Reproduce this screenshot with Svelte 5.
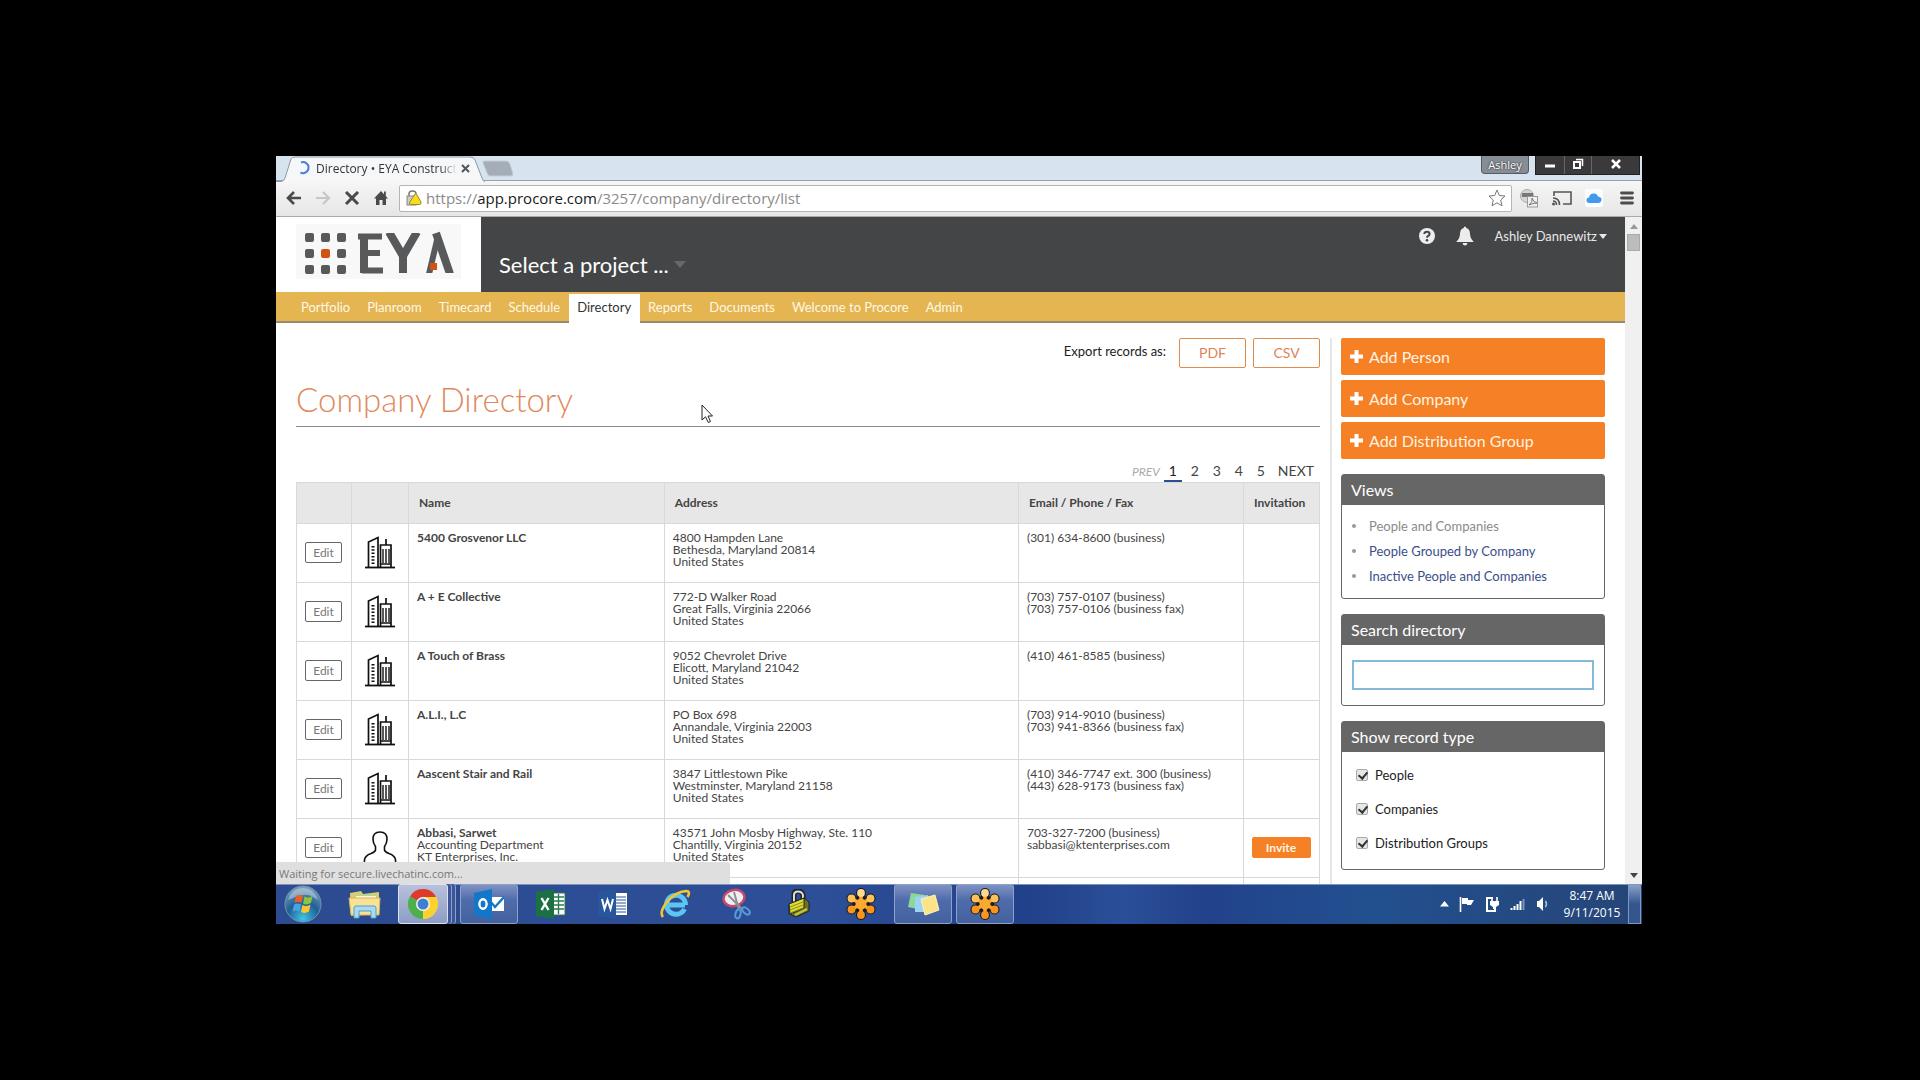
<script>
  const tabs = ['Portfolio', 'Planroom', 'Timecard', 'Schedule', 'Directory', 'Reports', 'Documents', 'Welcome to Procore', 'Admin'];
  const actions = ['Add Person', 'Add Company', 'Add Distribution Group'];
  const views = ['People and Companies', 'People Grouped by Company', 'Inactive People and Companies'];
  const types = ['People', 'Companies', 'Distribution Groups'];
  const rows = [
    { name: '5400 Grosvenor LLC', address: ['4800 Hampden Lane', 'Bethesda, Maryland 20814', 'United States'], contact: ['(301) 634-8600 (business)'] },
    { name: 'A + E Collective', address: ['772-D Walker Road', 'Great Falls, Virginia 22066', 'United States'], contact: ['(703) 757-0107 (business)', '(703) 757-0106 (business fax)'] },
    { name: 'A Touch of Brass', address: ['9052 Chevrolet Drive', 'Elicott, Maryland 21042', 'United States'], contact: ['(410) 461-8585 (business)'] },
    { name: 'A.L.I., L.C', address: ['PO Box 698', 'Annandale, Virginia 22003', 'United States'], contact: ['(703) 914-9010 (business)', '(703) 941-8366 (business fax)'] },
    { name: 'Aascent Stair and Rail', address: ['3847 Littlestown Pike', 'Westminster, Maryland 21158', 'United States'], contact: ['(410) 346-7747 ext. 300 (business)', '(443) 628-9173 (business fax)'] },
    { name: 'Abbasi, Sarwet', person: true, detail: ['Accounting Department', 'KT Enterprises, Inc.'], address: ['43571 John Mosby Highway, Ste. 110', 'Chantilly, Virginia 20152', 'United States'], contact: ['703-327-7200 (business)', 'sabbasi@ktenterprises.com'] }
  ];
  const dots = [0, 1, 2, 3, 4, 5, 6, 7, 8];
  const petals = [0, 60, 120, 180, 240, 300].map((a) => ({
    x: 16 + 11 * Math.sin((a * Math.PI) / 180),
    y: 16 - 11 * Math.cos((a * Math.PI) / 180)
  }));
</script>

{#snippet flower()}
  <svg width="32" height="32" viewBox="0 0 32 32">
    {#each petals as p}<circle cx={p.x} cy={p.y} r="5" fill="#1c1a1c" />{/each}
    <circle cx="16" cy="16" r="9" fill="#1c1a1c" />
    {#each petals as p}
      <path d="M16 16L{p.x} {p.y}" stroke="#fba92c" stroke-width="3.500" />
      <circle cx={p.x} cy={p.y} r="3.900" fill={p.y < 8 ? '#ffd890' : p.y < 16 ? '#fdc25c' : '#f9951c'} />
    {/each}
    <circle cx="16" cy="16" r="5.500" fill="#fba930" />
  </svg>
{/snippet}

<div class="stage">
  <div class="window">
    <header class="strip">
      <svg class="tabshape" width="210" height="26" viewBox="0 0 210 26">
        <path d="M0 25.500H7Q8 25 9 22L15 3Q16 1 19 1H194Q198 1 199 4L206 22Q207 25.500 209 25.500V26H0Z" fill="#f6f7f8" />
        <path d="M0 25.500H5Q8 25 9 22L15 3Q16 1 19 1H194Q198 1 199 4L206 22Q207 25.500 209 25.500" fill="none" stroke="#8c98a5" />
      </svg>
      <div class="tab">
        <svg width="14" height="14" viewBox="0 0 14 14"><path d="M3 1.500A5.500 5.500 0 1 1 2.500 11.500" fill="none" stroke="#4a7fd6" stroke-width="2" /></svg>
        <span class="tabtitle">Directory • EYA Constructi</span>
        <button class="bare" aria-label="Close tab"><svg width="9" height="9" viewBox="0 0 9 9"><path d="M1 1L8 8M8 1L1 8" stroke="#555" stroke-width="2" /></svg></button>
      </div>
      <button class="bare newtab" aria-label="New tab"><svg width="32" height="18" viewBox="0 0 32 18"><path d="M2 1H24Q27 1 28 4L31 14Q31 16 29 16H8Q6 16 5 13L1 3Q1 1 2 1Z" fill="#a5adb8" stroke="#c3ccd6" /></svg></button>
      <div class="grow"></div>
      <button class="user">Ashley</button>
      <div class="winbtns">
        <button aria-label="Minimize"><svg width="12" height="12" viewBox="0 0 12 12"><path d="M1 8H11" stroke="#fff" stroke-width="3" /></svg></button>
        <button aria-label="Restore"><svg width="12" height="12" viewBox="0 0 12 12" fill="none" stroke="#fff"><path d="M4 1.500H10.500V8" stroke-width="1.500" /><rect x="2" y="4" width="6" height="6" stroke-width="2" /></svg></button>
        <button aria-label="Close"><svg width="12" height="12" viewBox="0 0 12 12"><path d="M2 2L10 10M10 2L2 10" stroke="#fff" stroke-width="2.500" /></svg></button>
      </div>
    </header>

    <div class="toolbar">
      <button class="bare" aria-label="Back"><svg width="16" height="14" viewBox="0 0 16 14"><path d="M15 7H3M8 1L2 7L8 13" fill="none" stroke="#4a4a4a" stroke-width="2.600" /></svg></button>
      <button class="bare" aria-label="Forward"><svg width="16" height="14" viewBox="0 0 16 14"><path d="M1 7H13M8 1L14 7L8 13" fill="none" stroke="#c6c6c6" stroke-width="2.200" /></svg></button>
      <button class="bare" aria-label="Stop"><svg width="16" height="14" viewBox="0 0 16 14"><path d="M2 1L14 13M14 1L2 13" stroke="#4a4a4a" stroke-width="3" /></svg></button>
      <button class="bare" aria-label="Home"><svg width="16" height="16" viewBox="0 0 16 16"><path d="M8 1L1 8.500H3V15H6.500V10H9.500V15H13V8.500H15L12.800 6V1.500H11V4.200Z" fill="#4a4a4a" /></svg></button>
      <div class="omni">
        <svg width="16" height="17" viewBox="0 0 16 17"><path d="M3 7V4Q3 1 6.500 1T10 4V7" fill="none" stroke="#777" stroke-width="1.500" /><rect x="1" y="6" width="9" height="9" fill="#ccc" stroke="#888" /><path d="M9 4Q10 3 11 5L15 12Q15.500 14.500 13.500 14.500H5Q3 14.500 3.500 12.500Z" fill="#f5dc1e" stroke="#9b8a20" /></svg>
        <span class="url" role="textbox" aria-label="Address" aria-readonly="true" tabindex="0">https://<b>app.procore.com</b>/3257/company/directory/list</span>
        <svg width="20" height="20" viewBox="0 0 20 20"><path d="M10 2L12.300 7.500L18 8L13.700 12L15 17.800L10 14.800L5 17.800L6.300 12L2 8L7.700 7.500Z" fill="#fff" stroke="#777" /></svg>
      </div>
      <button class="bare" aria-label="PDF converter"><svg width="20" height="20" viewBox="0 0 20 20"><circle cx="8" cy="8" r="6.500" fill="#d5d5d5" stroke="#aaa" /><rect x="3" y="5" width="11" height="4" fill="#777" /><rect x="8.500" y="8.500" width="10" height="10.500" fill="#f0f0f0" stroke="#999" /><path d="M10 17Q14 14 13 10Q14 14 18 15Q14 15 10 17" fill="none" stroke="#777" /></svg></button>
      <button class="bare" aria-label="Cast"><svg width="20" height="16" viewBox="0 0 20 16" fill="none" stroke="#555" stroke-width="1.600"><path d="M2 6V2H19V14H11M1 8Q7.500 8 7.500 15M1 11Q4.500 11 4.500 15" /><circle cx="1.500" cy="14" r=".7" /></svg></button>
      <button class="bare" aria-label="iCloud"><svg width="18" height="18" viewBox="0 0 18 18"><rect width="18" height="18" rx="3" fill="#fcfdff" /><path d="M4 14Q1 13.500 1.500 10.500Q2 8.500 4 8.500Q5 4 9 4.500Q12 4.500 13 7.500Q17 8 16.500 11Q16 14 13 14Z" fill="#429bea" /></svg></button>
      <button class="bare menu" aria-label="Menu"><svg width="14" height="14" viewBox="0 0 14 14"><path d="M1.500 2H12.500M1.500 7H12.500M1.500 12H12.500" stroke="#4c4c4c" stroke-width="2.800" stroke-linecap="round" /></svg></button>
    </div>

    <div class="view">
      <div class="site">
        <header class="masthead">
          <a class="brand" href="#home" aria-label="EYA home">
            <svg class="logo" width="165" height="55" viewBox="0 0 165 55">
              <rect width="165" height="55" fill="#f8f8f8" />
              {#each dots as d}<rect x={9 + (d % 3) * 16} y={9 + Math.floor(d / 3) * 16} width="9" height="9" rx="2" fill={d === 4 ? '#cf5413' : '#58595b'} />{/each}
              <g fill="none" stroke="#58595b">
                <path d="M62 12.500H86M69 10V49M66 29H84M66 46.500H87" stroke-width="6" />
                <path d="M68 10V49" stroke-width="8" />
                <path d="M93 8L107 32L121 8M107 30V49" stroke-width="8" />
                <path d="M133 50L142 12" stroke-width="6" />
                <path d="M140 9L154 50" stroke-width="8" />
              </g>
              <rect x="80" y="0" width="60" height="9" fill="#f8f8f8" /><rect x="128" y="49" width="36" height="5" fill="#f8f8f8" />
              <rect x="134" y="39" width="7" height="7" fill="#cf5413" />
            </svg>
          </a>
          <button class="project">Select a project ... <i class="caret"></i></button>
          <div class="grow"></div>
          <div class="account">
            <button class="bare" aria-label="Help"><svg width="18" height="18" viewBox="0 0 18 18"><circle cx="9" cy="9" r="8" fill="#eee" /><path d="M6.300 7Q6.500 4.800 9 4.800T11.600 7Q11.600 8.300 10 9Q9 9.600 9 10.800" fill="none" stroke="#444547" stroke-width="2" /><circle cx="9" cy="13.200" r="1.300" fill="#444547" /></svg></button>
            <button class="bare" aria-label="Notifications"><svg width="18" height="20" viewBox="0 0 18 20"><path d="M9 .5Q10.300 .5 10.300 2Q14 3 14 8Q14.300 13 17.500 15.500V16H.5V15.500Q3.700 13 4 8Q4 3 7.700 2Q7.700 .5 9 .5ZM6.500 17H11.500Q11 19.500 9 19.500T6.500 17Z" fill="#ececec" /></svg></button>
            <button class="bare me">Ashley Dannewitz<i class="caret"></i></button>
          </div>
        </header>

        <nav class="tabs">
          {#each tabs as t}<a href="#{t}" class:on={t === 'Directory'}>{t}</a>{/each}
        </nav>

        <div class="columns">
          <main>
            <div class="export"><span>Export records as:</span><button>PDF</button><button>CSV</button></div>
            <h1>Company Directory</h1>
            <div class="pager">
              <em>PREV</em><a href="#1" class="cur">1</a><a href="#2">2</a><a href="#3">3</a><a href="#4">4</a><a href="#5">5</a><a href="#next" class="next">NEXT</a>
            </div>
            <table>
              <colgroup><col class="c1" /><col class="c2" /><col class="c3" /><col class="c4" /><col class="c5" /><col class="c6" /></colgroup>
              <thead><tr><th></th><th></th><th>Name</th><th>Address</th><th>Email / Phone / Fax</th><th>Invitation</th></tr></thead>
              <tbody>
                {#each rows as r}
                  <tr>
                    <td class="mid"><button class="edit">Edit</button></td>
                    <td class="mid">
                      {#if r.person}
                        <svg width="34" height="36" viewBox="0 0 34 36"><path d="M12.500 17.500Q10 14.500 10 10Q10 3 17 3T24 10Q24 14.500 21.500 17.500V21Q22 23 26 24.500Q32 26.500 32.500 31Q33 34 31.500 34H2.500Q1 34 1.500 31Q2 26.500 8 24.500Q12 23 12.500 21Z" fill="none" stroke="#111" stroke-width="1.600" /></svg>
                      {:else}
                        <svg width="32" height="36" viewBox="0 0 32 36" fill="none" stroke="#111"><path d="M1 33.500H31" stroke-width="1.800" /><path d="M4.500 33V8L14 3.500V33M16.500 33V11H27V33M22 11V5" stroke-width="1.700" /><path d="M9 12V30" stroke-width="3" stroke-dasharray="1.500 1.800" /><path d="M19 15V29M22 15V29M25 15V29M17 30H27" stroke-width="1.400" /></svg>
                      {/if}
                    </td>
                    <td><strong>{r.name}</strong>{#each r.detail ?? [] as d}<div>{d}</div>{/each}</td>
                    <td>{#each r.address as a}<div>{a}</div>{/each}</td>
                    <td>{#each r.contact as c}<div>{c}</div>{/each}</td>
                    <td class="mid">{#if r.person}<button class="invite">Invite</button>{/if}</td>
                  </tr>
                {/each}
                <tr><td></td><td></td><td></td><td></td><td></td><td></td></tr>
              </tbody>
            </table>
          </main>

          <aside>
            <div class="actions">
              {#each actions as a}<button><svg width="13" height="13" viewBox="0 0 13 13"><path d="M6.500 0V13M0 6.500H13" stroke="#fff" stroke-width="4" /></svg>{a}</button>{/each}
            </div>
            <section>
              <h2>Views</h2>
              <ul>{#each views as v, i}<li><a href="#{v}" class:here={i === 0}>{v}</a></li>{/each}</ul>
            </section>
            <section>
              <h2><label for="q">Search directory</label></h2>
              <div class="search"><input id="q" type="text" /></div>
            </section>
            <section>
              <h2>Show record type</h2>
              <div class="types">{#each types as t}<label><input type="checkbox" checked />{t}</label>{/each}</div>
            </section>
          </aside>
        </div>
      </div>
      <div class="scroll"><i class="up"></i><b></b><i class="down"></i></div>
      <div class="status">Waiting for secure.livechatinc.com...</div>
      <svg class="cursor" width="14" height="20" viewBox="0 0 14 20"><path d="M1 1V16L4.500 12.800L7.300 18.500L9.500 17.500L7 12H11.500Z" fill="#fff" stroke="#222" /></svg>
    </div>

    <footer class="taskbar">
      <button class="start" aria-label="Start">
        <svg width="38" height="38" viewBox="0 0 38 38">
          <defs><radialGradient id="orb" cx=".5" cy=".9" r=".9"><stop offset="0" stop-color="#41c4e8" /><stop offset=".5" stop-color="#1f5f94" /><stop offset="1" stop-color="#7fa2bd" /></radialGradient></defs>
          <circle cx="19" cy="19" r="18" fill="url(#orb)" stroke="#6f93b4" />
          <path d="M4 15Q8 3 19 3T34 15Q26 9 19 10T4 15" fill="#fff" opacity=".35" />
          <path d="M12 11Q15 9 19 11L17.500 18Q14 16 10.500 18Z" fill="#e8602c" /><path d="M20.500 11.500Q24 14 28.500 11L27 18Q22.500 20.500 19 18.500Z" fill="#8cc63f" />
          <path d="M10 19.500Q14 17.500 17 19.500L15.500 26.500Q12 24.500 8.500 26.500Z" fill="#4aa3e0" /><path d="M18.500 20Q22 22.500 26.500 19.500L25 26.500Q21 29 17 27Z" fill="#fdc62f" />
        </svg>
      </button>
      <button aria-label="Explorer"><svg width="34" height="32" viewBox="0 0 34 32"><path d="M2 5L13 3L15 6L31 4V26L3 28Z" fill="#e9c768" /><path d="M6 6H29V22H6Z" fill="#b6d78b" /><path d="M8 8H28V22H8Z" fill="#fff6cf" /><path d="M1 10H32L31 27H3Z" fill="#f7e296" stroke="#d5b45c" /><path d="M6 30V20Q6 18 8 18H26Q28 18 28 20V30H23V23H11V30Z" fill="#a8daf2" stroke="#4f9fcb" /></svg></button>
      <button class="lit" aria-label="Chrome"><svg width="30" height="30" viewBox="0 0 30 30"><path d="M15 15L2 7.500A15 15 0 0 1 28 7.500Z" fill="#dd3b2c" /><path d="M15 15L28 7.500A15 15 0 0 1 15 30Z" fill="#fdd130" /><path d="M15 15V30A15 15 0 0 1 2 7.500Z" fill="#4db04b" /><path d="M15 8H28A15 15 0 0 1 15 30L21 19Z" fill="#fdd130" /><circle cx="15" cy="15" r="7" fill="#f3f3f3" /><circle cx="15" cy="15" r="5.500" fill="#3f7fd0" /></svg></button>
      <button class="open" aria-label="Outlook"><svg width="32" height="30" viewBox="0 0 32 30"><rect x="14" y="8" width="17" height="14" fill="#fff" /><path d="M17 12L22 18L31 8" fill="none" stroke="#1378c8" stroke-width="2.400" /><path d="M1 4L19 0V30L1 26Z" fill="#1277c9" /><ellipse cx="10" cy="15" rx="3.600" ry="4.800" fill="none" stroke="#fff" stroke-width="2.400" /></svg></button>
      <button aria-label="Excel"><svg width="30" height="30" viewBox="0 0 30 30"><path d="M16 4H29V26H16Z" fill="#fff" stroke="#2b7b4e" /><path d="M17 8H28M17 12H28M17 16H28M17 20H28M22.500 5V25" stroke="#2b7b4e" stroke-width="1.400" /><path d="M0 3L18 0V30L0 27Z" fill="#1d7044" /><path d="M5.500 9L12.500 21M12.500 9L5.500 21" stroke="#fff" stroke-width="2.400" /></svg></button>
      <button aria-label="Word"><svg width="30" height="30" viewBox="0 0 30 30"><path d="M16 4H29V26H16Z" fill="#fff" /><path d="M18 8H28M18 11H28M18 14H28M18 17H28M18 20H28M18 23H28" stroke="#2a579a" /><path d="M0 3L18 0V30L0 27Z" fill="#28569c" /><path d="M4 10L6.500 20L9.500 11L12.500 20L15 10" fill="none" stroke="#fff" stroke-width="2" /></svg></button>
      <button aria-label="Internet Explorer"><svg width="32" height="32" viewBox="0 0 32 32"><path d="M8 17H26M25.500 21A9.500 9.500 0 1 1 26.500 17" fill="none" stroke="#5cc5f3" stroke-width="5" /><path d="M4 29Q0 24 8 14T27 3Q32 3 28.500 9" fill="none" stroke="#f3c630" stroke-width="2.600" /></svg></button>
      <button aria-label="Snipping Tool"><svg width="32" height="32" viewBox="0 0 32 32"><ellipse cx="13" cy="10" rx="10.500" ry="8" fill="#f3eef0" stroke="#c8476b" stroke-width="2.500" transform="rotate(-12 13 10)" /><path d="M7 7L21 21M13 4L18 22" stroke="#8a9099" stroke-width="2" /><ellipse cx="17" cy="26" rx="2.500" ry="4.500" fill="none" stroke="#5a9ad8" stroke-width="2" transform="rotate(15 17 26)" /><ellipse cx="25" cy="23" rx="2.500" ry="4.500" fill="none" stroke="#5a9ad8" stroke-width="2" transform="rotate(-50 25 23)" /></svg></button>
      <button aria-label="Lock"><svg width="24" height="30" viewBox="0 0 24 30"><path d="M7 13V6Q7 2 11 2T16 6V10" fill="none" stroke="#222" stroke-width="5" /><path d="M7 13V6Q7 2.500 11 2.500T16 6V10" fill="none" stroke="#ddd" stroke-width="2" /><path d="M2 15L17 9L22 13V22L9 28L2 25Z" fill="#6f7024" stroke="#222" /><path d="M2 15L17 9V19L3 25Z" fill="#dcdc2e" stroke="#222" /><path d="M3 18L16 13M3 21L16 16M3 24L16 19" stroke="#8f8f20" /><path d="M8 26L20 20" stroke="#c6c63c" stroke-width="2" /></svg></button>
      <button aria-label="GoToMeeting">{@render flower()}</button>
      <button class="open" aria-label="Sticky Notes"><svg width="34" height="28" viewBox="0 0 34 28"><path d="M5 3L19 5L16 20L2 17Z" fill="#8fd69a" /><path d="M9 7L22 5L24 22L9 22Z" fill="#9bd3f4" /><path d="M15 9L29 5L33 20L19 25Z" fill="#fbe487" stroke="#fff3b8" /></svg></button>
      <button class="open" aria-label="GoToMeeting session">{@render flower()}</button>
      <div class="grow"></div>
      <div class="tray">
        <svg width="9" height="6" viewBox="0 0 9 6"><path d="M0 5.500L4.500 0L9 5.500Z" fill="#fff" /></svg>
        <svg width="16" height="16" viewBox="0 0 16 16"><path d="M1.500 1V16" stroke="#fff" stroke-width="1.600" /><path d="M3 2H9V4H15L12 9H8V8H3Z" fill="#fff" /></svg>
        <svg width="15" height="16" viewBox="0 0 15 16"><path d="M5 2H2V15H10V13" fill="none" stroke="#fff" stroke-width="2" /><path d="M4 1H8V3H4Z" fill="#fff" /><path d="M7 1V5M12 1V5" stroke="#fff" stroke-width="1.600" /><path d="M5 5H14V9L11 11V13H8V11L5 9Z" fill="#fff" /></svg>
        <svg width="16" height="14" viewBox="0 0 16 14"><path d="M1.500 11V13M4.500 9V13M7.500 7V13M10.500 4V13" stroke="#fff" stroke-width="2" /><path d="M13.500 2V13" stroke="#7d95c0" stroke-width="2" /></svg>
        <svg width="14" height="14" viewBox="0 0 14 14"><path d="M1 4H3L7 0V14L3 10H1Z" fill="#fff" /><path d="M9.500 4Q11.500 7 9.500 10" fill="none" stroke="#a9c2e6" stroke-width="1.500" /></svg>
      </div>
      <div class="clock"><span>8:47 AM</span><span>9/11/2015</span></div>
      <button class="desk" aria-label="Show desktop"></button>
    </footer>
  </div>
</div>

<style>
  :global(body) { margin: 0; background: #000; }
  .stage { box-sizing: border-box; height: 100vh; padding: 156px 278px 156px 276px; background: #000; }
  .stage :global(*) { box-sizing: border-box; }
  .window { display: flex; flex-direction: column; height: 100%; background: #fff; font-family: Lato, sans-serif; overflow: hidden; }
  button { font-family: inherit; margin: 0; cursor: pointer; }
  svg { display: block; flex: none; }
  a { text-decoration: none; }
  .grow { flex: 1; }
  .bare { display: flex; align-items: center; border: 0; background: none; padding: 0; color: inherit; }

  .strip { position: relative; display: flex; height: 25px; flex: none; background: #d7e4f0; border-bottom: 1px solid #97a3b0; font-family: "Open Sans", sans-serif; }
  .tabshape { position: absolute; left: 0; top: 0; }
  .tab { position: relative; display: flex; align-items: center; width: 202px; padding: 0 8px 0 22px; gap: 4px; }
  .tabtitle { flex: 1; overflow: hidden; white-space: nowrap; font-size: 12px; color: #333; -webkit-mask-image: linear-gradient(90deg, #000 88%, transparent); mask-image: linear-gradient(90deg, #000 88%, transparent); }
  .newtab { position: relative; align-items: flex-start; margin-left: 4px; padding-top: 4px; }
  .user { height: 18px; width: 48px; padding: 0; margin-right: 6px; border: 1px solid #555b63; border-top: 0; border-radius: 0 0 4px 4px; background: #878d95; color: #fff; font-size: 11px; line-height: 16px; text-shadow: 0 0 2px #000; }
  .winbtns { display: flex; height: 19px; margin-right: 2px; background: #3a3a3c; border: 1px solid #222; border-top: 0; }
  .winbtns button { display: flex; align-items: center; justify-content: center; width: 29px; padding: 0 0 2px; border: 0; border-right: 1px solid #666; background: none; }
  .winbtns button:nth-child(2) { width: 27px; }
  .winbtns button:last-child { width: 47px; border-right: 0; }

  .toolbar { display: flex; align-items: center; flex: none; height: 36px; padding: 0 8px 1px 10px; gap: 13px; background: linear-gradient(#f6f6f6, #e6e6e6); border-bottom: 1px solid #aaa; }
  .omni { display: flex; flex: 1; align-items: center; height: 27px; margin: 0 -6px 0 -3px; padding: 0 4px 0 6px; gap: 4px; background: #fff; border: 1px solid #b5b5b5; border-radius: 2px; }
  .url { flex: 1; font-family: "Open Sans", sans-serif; font-size: 15px; color: #8a8a8a; white-space: nowrap; }
  .url b { font-weight: 400; color: #1a1a1a; }
  .menu { margin-left: 4px; }

  .view { position: relative; display: flex; flex: 1; min-height: 0; overflow: hidden; }
  .site { flex: 1; min-width: 0; background: #fff; }
  .masthead { display: flex; height: 75px; background: #444547; color: #fff; }
  .brand { width: 205px; padding: 7px 20px; background: #fff; }
  .project { display: flex; align-items: center; gap: 5px; height: 32px; margin: 31px 0 0 18px; padding: 0; border: 0; background: none; color: #fff; font-size: 22px; }
  .caret { border: 6px solid transparent; border-top: 7px solid #68696b; border-bottom: 0; }
  .account { display: flex; align-items: center; height: 22px; margin-top: 8px; padding-right: 18px; gap: 20px; }
  .me { font-size: 13px; color: #e8e8e8; gap: 2px; }
  .me .caret { border-width: 5px 4px 0; border-top-color: #e8e8e8; }

  .tabs { display: flex; height: 31px; padding: 2px 0 0 17px; background: #e4b551; border-bottom: 2px solid #998b70; }
  .tabs a { height: 29px; padding: 0 9px 0 8px; line-height: 27px; font-size: 13px; color: #fff8e6; }
  .tabs a.on { background: #fff; color: #333; }

  .columns { display: flex; padding: 15px 20px 0; }
  main { flex: 1; min-width: 0; padding-right: 10px; }
  .export { display: flex; justify-content: flex-end; height: 30px; gap: 7px; font-size: 13px; color: #222; }
  .export span { margin-right: 6px; line-height: 27px; }
  .export button { width: 67px; height: 30px; padding: 0 0 2px; border: 1px solid #e08b4a; border-radius: 2px; background: #fff; color: #dd8358; font-size: 14px; }
  h1 { margin: 0; height: 59px; padding-top: 11px; border-bottom: 1px solid #8c8c8c; color: #e08a5c; font-weight: 300; font-size: 33px; line-height: 40px; }
  .pager { display: flex; justify-content: flex-end; align-items: flex-end; height: 55px; padding-right: 6px; font-size: 14px; line-height: 18px; }
  .pager em { font-size: 12px; color: #aaa; padding: 0 2px 1px 0; }
  .pager a { width: 18px; margin: 0 2px; border-bottom: 2px solid transparent; text-align: center; color: #444; }
  .pager a.cur { border-color: #2a4f93; color: #222; }
  .pager a.next { width: auto; margin: 0 0 0 6px; }

  table { width: 100%; border-collapse: collapse; table-layout: fixed; font-size: 12px; line-height: 12px; color: #444; }
  .c1 { width: 55px; } .c2 { width: 57px; } .c3 { width: 25%; } .c5 { width: 22%; } .c6 { width: 76px; }
  th, td { border: 1px solid #d9d9d9; }
  th { height: 41px; padding: 0 10px; background: #e7e7e7; text-align: left; font-weight: 700; }
  td { height: 59px; padding: 8px; vertical-align: top; }
  td.mid { padding: 0 1px 2px 0; vertical-align: middle; }
  td.mid > :global(*) { margin: 0 auto; }
  td strong { display: block; }
  .edit { display: block; width: 37px; height: 21px; padding: 0; border: 1px solid #666; border-radius: 2px; background: #fff; color: #777; font-size: 12px; }
  .invite { display: block; width: 59px; height: 21px; padding: 0; border: 0; border-radius: 2px; background: #f58025; color: #fff3e0; font-size: 12px; font-weight: 700; }

  aside { width: 275px; border-left: 2px solid #e6e6e6; padding-left: 9px; }
  .actions { display: grid; gap: 5px; }
  .actions button { display: flex; align-items: center; gap: 6px; height: 37px; padding: 0 9px; border: 0; border-radius: 2px; background: #f58025; color: #fff3e0; font-size: 16px; }
  section { margin-top: 15px; border: 1px solid #666; border-radius: 3px; }
  h2 { margin: 0; height: 30px; padding: 0 9px; background: #666; color: #fff; font-size: 16px; line-height: 30px; font-weight: 400; }
  ul { list-style: none; margin: 0; padding: 8px 10px 10px; }
  li { display: flex; align-items: center; height: 25px; gap: 13px; font-size: 13px; color: #999; }
  li::before { content: ""; width: 4px; height: 4px; border-radius: 2px; background: #999; }
  li a { color: #3a4f8a; }
  li a.here { color: #8a8a8a; }
  .search { padding: 15px 10px; }
  .search input { display: block; width: 100%; height: 30px; border: 2px solid #84b9d8; background: #fff; outline: 0; }
  .types { padding: 6px 14px 9px; }
  .types label { display: flex; align-items: center; height: 34px; gap: 7px; font-size: 13px; color: #222; }
  .types input { appearance: none; width: 12px; height: 12px; margin: 0; border: 1px solid #aaa; border-radius: 2px; background: #e6e6e6; position: relative; }
  .types input:checked::after { content: ""; position: absolute; left: 3px; top: 0; width: 4px; height: 7px; border: solid #333; border-width: 0 2px 2px 0; transform: rotate(40deg); }

  .scroll { display: flex; flex-direction: column; align-items: center; width: 17px; padding: 7px 0 6px; background: #f0f0f0; }
  .scroll b { width: 13px; height: 17px; margin-top: 5px; background: #bcbcbc; border: 1px solid #aaa; }
  .scroll i { border: 4px solid transparent; }
  .scroll .up { border-top: 0; border-bottom: 5px solid #999; }
  .scroll .down { margin-top: auto; border-bottom: 0; border-top: 5px solid #444; }
  .status { position: absolute; left: 0; bottom: 0; width: 454px; height: 22px; padding-left: 3px; border-radius: 0 3px 0 0; background: #dfdfdf; color: #777; font-family: "Open Sans", sans-serif; font-size: 11px; line-height: 23px; }
  .cursor { position: absolute; left: 425px; top: 187px; }

  .taskbar { display: flex; align-items: stretch; flex: none; height: 40px; box-shadow: inset 0 1px #7c93bf; background: linear-gradient(90deg, #2c4b90 0%, #2d4f97 40%, #21418a 55%, #2a4f98 62%, #22428b 68%, #22508f 80%, #264577 100%); }
  .taskbar button { display: flex; align-items: center; justify-content: center; width: 58px; margin: 0 2px; padding: 0; border: 1px solid transparent; border-radius: 3px; background: none; }
  .taskbar .start { width: 54px; margin: 0 4px 0 0; }
  .taskbar .lit { width: 50px; margin-right: 10px; border-color: #dbe3f2; background: linear-gradient(#b8c1da, #8d9dc6); box-shadow: 3px 0 0 #3d5596, 4px 0 0 #8ea1cb, 7px 0 0 #3d5596, 8px 0 0 #8ea1cb; }
  .taskbar .open { border-color: #8ea1cb; background: linear-gradient(#7f93c2, #4f6bab 40%, #43619f); }
  .tray { display: flex; align-items: center; gap: 10px; margin-right: 6px; color: #fff; }
  .clock { display: flex; flex-direction: column; justify-content: center; align-items: center; width: 72px; font-family: "Open Sans", sans-serif; font-size: 12px; line-height: 17px; color: #fff; }
  .taskbar .desk { width: 13px; margin: 0 1px 0 0; border-color: #7f97c4; border-radius: 0; background: linear-gradient(#8aa0c8, #35558f 50%); }
</style>
